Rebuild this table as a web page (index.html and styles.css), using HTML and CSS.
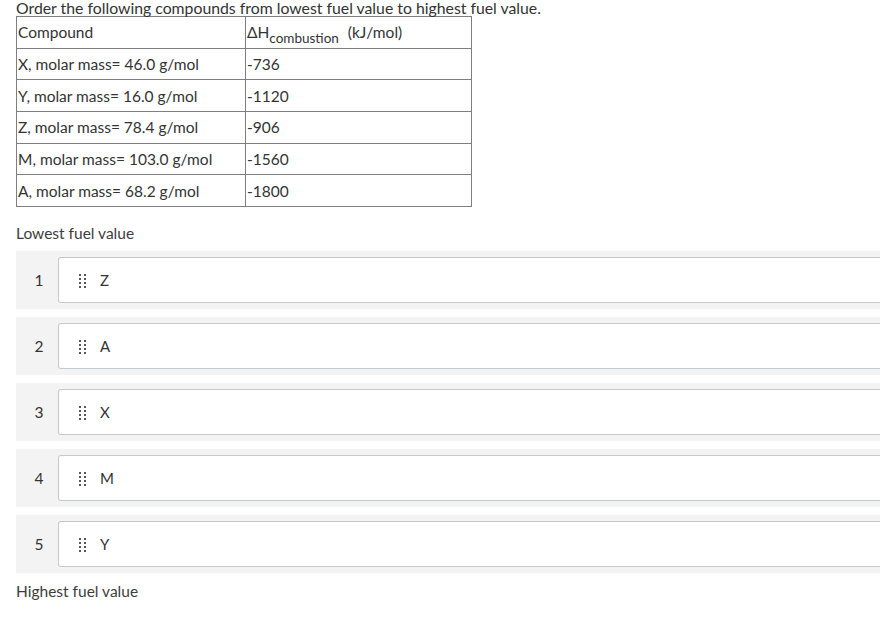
FILE: index.html
```html
<!DOCTYPE html>
<html>
<head>
<meta charset="utf-8">
<link rel="stylesheet" href="styles.css">
</head>
<body>
<div class="page">
  <p class="title">Order the following compounds from lowest fuel value to highest fuel value.</p>
  <table class="data">
    <tr><td class="c1">Compound</td><td class="c2">&Delta;H<sub>combustion</sub> (kJ/mol)</td></tr>
    <tr><td class="c1">X, molar mass= 46.0 g/mol</td><td class="c2">-736</td></tr>
    <tr><td class="c1">Y, molar mass= 16.0 g/mol</td><td class="c2">-1120</td></tr>
    <tr><td class="c1">Z, molar mass= 78.4 g/mol</td><td class="c2">-906</td></tr>
    <tr><td class="c1">M, molar mass= 103.0 g/mol</td><td class="c2">-1560</td></tr>
    <tr><td class="c1">A, molar mass= 68.2 g/mol</td><td class="c2">-1800</td></tr>
  </table>
  <p class="label top">Lowest fuel value</p>
  <ol class="order">
    <li class="band"><span class="num">1</span><div class="box"><span class="handle"><i></i><i></i><i></i><i></i><i></i><i></i><i></i><i></i></span><span class="item">Z</span></div></li>
    <li class="band"><span class="num">2</span><div class="box"><span class="handle"><i></i><i></i><i></i><i></i><i></i><i></i><i></i><i></i></span><span class="item">A</span></div></li>
    <li class="band"><span class="num">3</span><div class="box"><span class="handle"><i></i><i></i><i></i><i></i><i></i><i></i><i></i><i></i></span><span class="item">X</span></div></li>
    <li class="band"><span class="num">4</span><div class="box"><span class="handle"><i></i><i></i><i></i><i></i><i></i><i></i><i></i><i></i></span><span class="item">M</span></div></li>
    <li class="band"><span class="num">5</span><div class="box"><span class="handle"><i></i><i></i><i></i><i></i><i></i><i></i><i></i><i></i></span><span class="item">Y</span></div></li>
  </ol>
  <p class="label bottom">Highest fuel value</p>
</div>
</body>
</html>
```

FILE: styles.css
```css
html, body {
  margin: 0;
  padding: 0;
  overflow: hidden;
  background: #fff;
}
body {
  font-family: Lato, "Liberation Sans", sans-serif;
  color: #333;
}
.page {
  padding-left: 16px;
}
.title {
  margin: -1px 0 0 0;
  font-size: 15.8px;
  line-height: 17px;
  color: #333;
  white-space: nowrap;
}
.data {
  border-collapse: collapse;
  width: 456px;
  font-size: 15.5px;
  color: #333;
}
.data td {
  border: 1px solid #7f7f7f;
  padding: 0 1px;
  height: 30.7px;
  line-height: 20px;
  vertical-align: middle;
}
.data .c1 {
  width: 226px;
}
.data sub {
  font-size: 13.5px;
  vertical-align: -5px;
  line-height: 0;
  margin-right: 5px;
}
.label {
  font-size: 15.5px;
  line-height: 18px;
  margin: 0;
  color: #3d3d3d;
}
.label.top {
  margin-top: 17px;
  margin-bottom: 9px;
}
.label.bottom {
  margin-top: 9px;
}
.order {
  list-style: none;
  margin: 0;
  padding: 0;
  display: flex;
  flex-direction: column;
  gap: 8px;
  width: calc(100% + 60px);
}
.band {
  background: #f3f3f3;
  height: 58px;
  display: flex;
  align-items: center;
}
.num {
  box-sizing: border-box;
  width: 42px;
  padding-left: 4px;
  text-align: center;
  font-size: 15.5px;
  color: #333;
}
.box {
  flex: 1;
  height: 44px;
  background: #fff;
  border: 1px solid #c8c8c8;
  border-bottom-color: #c4cbd0;
  border-radius: 3px;
  display: flex;
  align-items: center;
  padding-left: 20px;
  gap: 14px;
}
.handle {
  display: grid;
  grid-template-columns: 2px 2px;
  grid-auto-rows: 2px;
  column-gap: 3px;
  row-gap: 2px;
  margin-top: 1px;
}
.handle i {
  display: block;
  width: 2px;
  height: 2px;
  background: #555;
}
.item {
  font-size: 15px;
  color: #333;
}
```
